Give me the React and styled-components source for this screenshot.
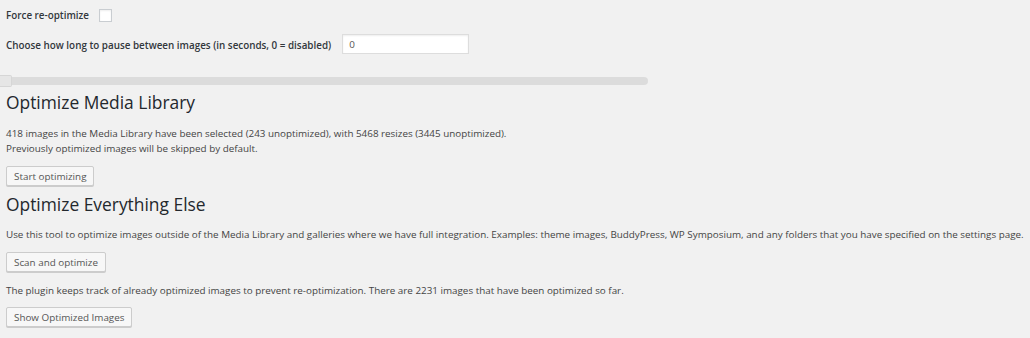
import React from "react";
import styled, { createGlobalStyle } from "styled-components";

const GlobalStyle = createGlobalStyle`
  html, body {
    margin: 0;
    padding: 0;
    background: #f1f1f1;
  }
  body {
    font-family: "Open Sans", "Noto Sans", sans-serif;
    color: #444;
    font-size: 9.85px;
  }
`;

const Page = styled.div`
  width: 1030px;
  height: 338px;
  overflow: hidden;
  padding: 0 6px;
  box-sizing: border-box;
`;

const FormTable = styled.div`
  display: flex;
  flex-direction: column;
`;

const Row = styled.div`
  display: flex;
  align-items: center;
  height: ${(p) => p.h}px;
`;

const Label = styled.label`
  font-weight: 600;
  color: #32373c;
  font-size: 9.85px;
  margin-right: ${(p) => p.gap}px;
`;

const Checkbox = styled.span`
  display: inline-block;
  width: 11px;
  height: 11px;
  background: #fff;
  border: 1px solid #c9cdd1;
  box-shadow: inset 0 1px 2px rgba(0, 0, 0, 0.07);
`;

const TextInput = styled.input`
  width: 127px;
  height: 20px;
  box-sizing: border-box;
  border: 1px solid #ddd;
  background: #fff;
  box-shadow: inset 0 1px 2px rgba(0, 0, 0, 0.07);
  font-family: inherit;
  font-size: 9.85px;
  color: #555;
  padding: 0 6px;
  margin-top: -3px;
  outline: none;
`;

const Track = styled.div`
  position: relative;
  width: 648px;
  height: 8px;
  margin: 17px 0 0 -6px;
  background: #dcdcdc;
  border-radius: 0 4px 4px 0;
`;

const Handle = styled.div`
  position: absolute;
  left: 0;
  top: -2px;
  width: 12px;
  height: 12px;
  background: #e6e6e6;
  border: 1px solid #d6d6d6;
  border-left: none;
  box-sizing: border-box;
  border-radius: 0 2px 2px 0;
`;

const Heading = styled.h2`
  font-size: 17.4px;
  font-weight: 400;
  color: #23282d;
  margin: ${(p) => p.m};
  line-height: 20px;
`;

const Text = styled.p`
  margin: ${(p) => p.m || "0"};
  line-height: 15px;
  color: #444;
`;

const Button = styled.button`
  display: block;
  height: 20px;
  padding: 0 7px;
  box-sizing: border-box;
  background: #f7f7f7;
  border: 1px solid #ccc;
  border-radius: 2px;
  box-shadow: 0 1px 0 #ccc;
  color: #555;
  font-family: inherit;
  font-size: 9.85px;
  line-height: 18px;
  margin: ${(p) => p.m || "0"};
  cursor: pointer;
`;

export default function App() {
  return (
    <>
      <GlobalStyle />
      <Page>
        <FormTable>
          <Row h={30}>
            <Label gap={10}>Force re-optimize</Label>
            <Checkbox />
          </Row>
          <Row h={30}>
            <Label gap={11}>
              Choose how long to pause between images (in seconds, 0 = disabled)
            </Label>
            <TextInput defaultValue="0" />
          </Row>
        </FormTable>

        <Track>
          <Handle />
        </Track>

        <Heading m="7px 0 0">Optimize Media Library</Heading>
        <Text m="14px 0 0">
          418 images in the Media Library have been selected (243 unoptimized), with 5468 resizes (3445 unoptimized).
          <br />
          Previously optimized images will be skipped by default.
        </Text>
        <Button m="10px 0 0">Start optimizing</Button>

        <Heading m="8px 0 0">Optimize Everything Else</Heading>
        <Text m="13px 0 0">
          Use this tool to optimize images outside of the Media Library and galleries where we have full integration. Examples: theme images, BuddyPress, WP Symposium, and any folders that you have specified on the settings page.
        </Text>
        <Button m="10px 0 0">Scan and optimize</Button>
        <Text m="11px 0 0">
          The plugin keeps track of already optimized images to prevent re-optimization. There are 2231 images that have been optimized so far.
        </Text>
        <Button m="9px 0 0">Show Optimized Images</Button>
      </Page>
    </>
  );
}
